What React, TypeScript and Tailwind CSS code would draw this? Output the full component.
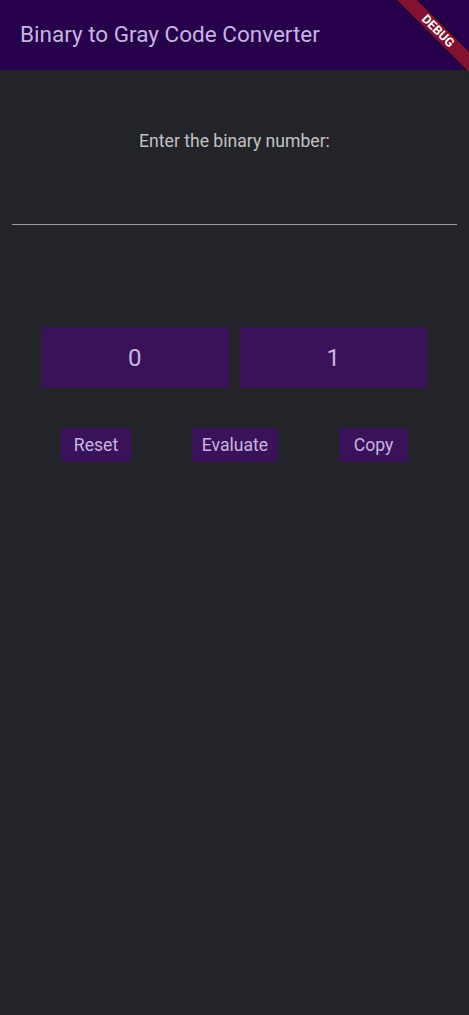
import { useState } from "react";

const toGray = (bin: string) => {
  if (!bin) return "";
  let out = bin[0];
  for (let i = 1; i < bin.length; i++) {
    out += bin[i] === bin[i - 1] ? "0" : "1";
  }
  return out;
};

export default function App() {
  const [value, setValue] = useState("");

  return (
    <div className="relative min-h-[1015px] w-full overflow-hidden bg-[#222429] font-['Roboto',sans-serif]">
      {/* App bar */}
      <header className="flex h-[70px] items-center bg-[#26004a] px-5">
        <h1 className="text-[22.5px] text-[#c7b5e2]">Binary to Gray Code Converter</h1>
      </header>

      <main className="flex flex-col">
        <p className="mt-[61px] text-center text-[17.6px] leading-[21px] text-[#c2c2c4]">
          Enter the binary number:
        </p>

        <div className="mx-3 mt-[40px]">
          <input
            type="text"
            value={value}
            onChange={(e) => setValue(e.target.value.replace(/[^01]/g, ""))}
            className="h-[33px] w-full border-b border-[#9c9ca0] bg-transparent text-[17px] text-[#d0d0d0] outline-none"
          />
        </div>

        <div className="mt-[102px] flex gap-[11px] pl-[41px] pr-[42px]">
          {["0", "1"].map((d) => (
            <button
              key={d}
              onClick={() => setValue(value + d)}
              className="h-[61px] flex-1 rounded-[3px] bg-[#3a1259] text-[24px] text-[#c7b5e2]"
            >
              {d}
            </button>
          ))}
        </div>

        <div className="mt-[40px] flex justify-evenly">
          <button
            onClick={() => setValue("")}
            className="h-[34px] w-[70px] rounded-[2px] bg-[#3a1259] text-[17.6px] text-[#c7b5e2]"
          >
            Reset
          </button>
          <button
            onClick={() => setValue(toGray(value))}
            className="h-[34px] w-[86px] rounded-[2px] bg-[#3a1259] text-[17.6px] text-[#c7b5e2]"
          >
            Evaluate
          </button>
          <button
            onClick={() => navigator.clipboard?.writeText(value)}
            className="h-[34px] w-[69px] rounded-[2px] bg-[#3a1259] text-[17.6px] text-[#c7b5e2]"
          >
            Copy
          </button>
        </div>
      </main>

      {/* debug ribbon */}
      <div className="pointer-events-none absolute left-[378px] top-[24px] flex h-[14px] w-[120px] rotate-45 items-center justify-center bg-[#b71c1c]/[0.63] shadow-[0_0_3px_rgba(0,0,0,0.3)]">
        <span className="text-[12.5px] font-bold leading-none text-white">DEBUG</span>
      </div>
    </div>
  );
}
